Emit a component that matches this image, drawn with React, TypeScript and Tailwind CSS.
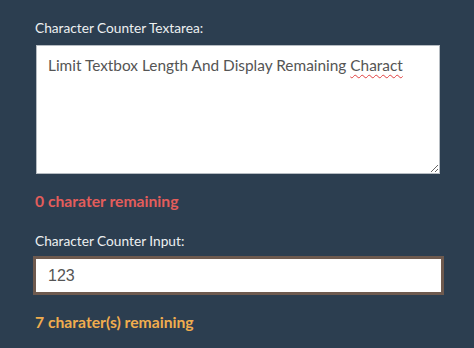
import { useState } from "react";

const MAX_TEXT = 50;
const MAX_INPUT = 10;

const App: React.FC = () => {
  const [text] = useState("Limit Textbox Length And Display Remaining Charact");
  const [value, setValue] = useState("123");

  const textLeft = Math.max(0, MAX_TEXT - text.length);
  const inputLeft = MAX_INPUT - value.length;

  return (
    <div className="min-h-[348px] w-full bg-[#2c3e50] px-[35px] pt-[18px] font-['Lato',sans-serif]">
      {/* Textarea counter */}
      <label className="block text-[13.7px] leading-[20px] text-[#ecf0f1]">Character Counter Textarea:</label>
      <div className="mt-[7px] ml-px -mr-px h-[129px] resize-y overflow-auto border border-[#b6bcc2] bg-white px-[11px] py-[7px] text-[15.4px] leading-[24px] text-[#555]">
        Limit Textbox Length And Display Remaining{" "}
        <span className="underline decoration-wavy decoration-[#e04040] decoration-1 underline-offset-[3px]">Charact</span>
      </div>
      <p className="mt-[15px] text-[15.7px] font-bold leading-[24px] text-[#e35d5b]">{textLeft} charater remaining</p>

      {/* Input counter */}
      <label className="mt-[18px] block text-[13.7px] leading-[20px] text-[#ecf0f1]">Character Counter Input:</label>
      <input
        value={value}
        onChange={(e) => setValue(e.target.value.slice(0, MAX_INPUT))}
        className="mt-[5px] -ml-[2px] block h-[39px] w-[411px] border-[3px] border-[#6e5a4f] bg-white px-[12px] font-['Liberation_Sans',sans-serif] text-[16px] text-[#555] outline-none"
      />
      <p className="mt-[15px] text-[15.7px] font-bold leading-[24px] text-[#f0ad4e]">{inputLeft} charater(s) remaining</p>
    </div>
  );
};

export default App;
